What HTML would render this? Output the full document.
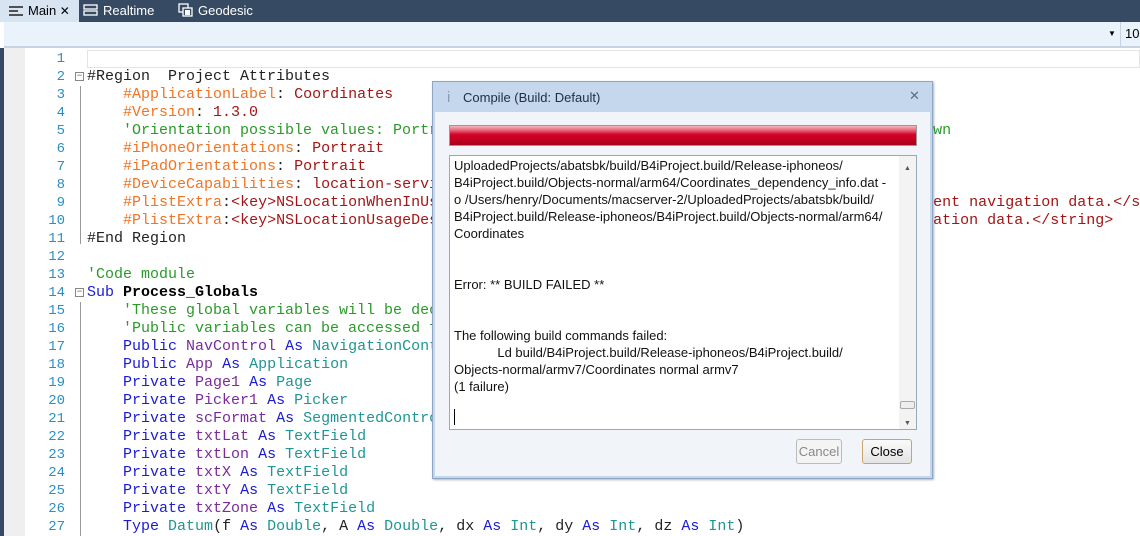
<!DOCTYPE html><html><head><meta charset="utf-8"><style>
*{margin:0;padding:0;box-sizing:border-box}
body{width:1140px;height:536px;overflow:hidden;background:#fff;position:relative;font-family:"Liberation Sans",sans-serif}
.tabs{position:absolute;left:0;top:0;width:1140px;height:22px;background:#364a63}
.tab{position:absolute;top:0;height:22px;font-size:13px;line-height:22px;color:#fff}
.tb{position:absolute;left:4px;top:22px;width:1136px;height:26px;background:#eaf2fb;border-bottom:2px solid #c5d3e2}
.lm{position:absolute;left:0;top:48px;width:4px;height:488px;background:#364a63}
.gm{position:absolute;left:4px;top:48px;width:21px;height:488px;background:#efefef}
.ln{position:absolute;left:25px;width:40px;text-align:right;font:14px/18px "Liberation Mono",monospace;color:#2b8fc3}
.cd{position:absolute;left:87px;white-space:pre;font:15px/18px "Liberation Mono",monospace;color:#222}
.k{color:#1b1bd6}.v{color:#7b2a9c}.t{color:#1f9595}.c{color:#2a9a2a}.o{color:#f07424}.r{color:#a31515}.b{font-weight:bold;color:#000}
.fold{position:absolute;left:75px;width:9px;height:9px;border:1px solid #888;background:#fff;font:9px/7px monospace;text-align:center;color:#555}
.dlg{position:absolute;left:432px;top:81px;width:501px;height:398px;background:#c4d7ec;border:1px solid #8ea6c2;box-shadow:1px 1px 2px rgba(0,0,0,.3)}
.dbody{position:absolute;left:2px;top:30px;width:495px;height:364px;background:#f1f5fa}
.pb{position:absolute;left:14px;top:13px;width:468px;height:21px;border:1px solid #999;background:linear-gradient(#f4b7bf 0%,#e8707e 20%,#d1022a 45%,#c8001f 70%,#a2001a 100%)}
.tx{position:absolute;left:14px;top:43px;width:468px;height:275px;background:#fff;border:1px solid #98a9bd;font:13px/17px "Liberation Sans",sans-serif;color:#111;padding:1px 0 0 4px}
.sb{position:absolute;right:0;top:0;width:17px;height:273px;background:#f3f3f3}
.btn{position:absolute;top:327px;height:25px;font:13px/23px "Liberation Sans",sans-serif;text-align:center;border-radius:3px}
</style></head><body>
<div class="tabs">
<div class="tab" style="left:0;width:79px;background:#d9e4f2;color:#000;padding-left:28px">Main <span style="font-size:12px">✕</span></div>
<svg style="position:absolute;left:8px;top:5px" width="16" height="12"><g fill="none" stroke="#222" stroke-width="1.5"><path d="M1 2h14M1 6h9M1 10h14"/></g></svg>
<svg style="position:absolute;left:83px;top:4px" width="16" height="14"><g fill="none" stroke="#fff" stroke-width="1.3"><rect x="1" y="1" width="13" height="4"/><rect x="1" y="7" width="13" height="4"/></g></svg>
<div class="tab" style="left:103px">Realtime</div>
<svg style="position:absolute;left:178px;top:3px" width="16" height="15"><g fill="none" stroke="#fff" stroke-width="1.3"><rect x="1" y="1" width="9" height="8"/><rect x="5" y="5" width="9" height="8" fill="#364a63"/></g><rect x="7" y="7" width="5" height="5" fill="#fff"/></svg>
<div class="tab" style="left:198px">Geodesic</div>
</div>
<div class="tb"><div style="position:absolute;left:1104px;top:7px;font-size:8px">▼</div><div style="position:absolute;left:1116px;top:0;width:20px;height:24px;border-left:1px solid #c5d3e2;font-size:13px;line-height:24px;padding-left:4px;overflow:hidden">100</div></div>
<div class="lm"></div><div class="gm"></div>
<div style="position:absolute;left:87px;top:50px;width:1053px;height:18px;border:1px solid #e4e4e4"></div>
<div style="position:absolute;left:80px;top:86px;width:1px;height:158px;background:#999"></div>
<div style="position:absolute;left:80px;top:302px;width:1px;height:234px;background:#999"></div>
<div class="fold" style="top:72px">−</div><div class="fold" style="top:288px">−</div>
<div class="ln" style="top:50px">1<br>2<br>3<br>4<br>5<br>6<br>7<br>8<br>9<br>10<br>11<br>12<br>13<br>14<br>15<br>16<br>17<br>18<br>19<br>20<br>21<br>22<br>23<br>24<br>25<br>26<br>27</div>
<div class="cd" style="top:50px">
#Region  Project Attributes
    <span class="o">#ApplicationLabel</span>: <span class="r">Coordinates</span>
    <span class="o">#Version</span>: <span class="r">1.3.0</span>
    <span class="c">'Orientation possible values: Portrait, LandscapeLeft, LandscapeRight and PortraitUpsideDown</span>
    <span class="o">#iPhoneOrientations</span>: <span class="r">Portrait</span>
    <span class="o">#iPadOrientations</span>: <span class="r">Portrait</span>
    <span class="o">#DeviceCapabilities</span>: <span class="r">location-services</span>
    <span class="o">#PlistExtra</span>:<span class="r">&lt;key&gt;NSLocationWhenInUseUsageDescription&lt;/key&gt;&lt;string&gt;Used to display the current navigation data.&lt;/string&gt;</span>
    <span class="o">#PlistExtra</span>:<span class="r">&lt;key&gt;NSLocationUsageDescription&lt;/key&gt;&lt;string&gt;Used to display the current navigation data.&lt;/string&gt;</span>
#End Region

<span class="c">'Code module</span>
<span class="k">Sub</span> <span class="b">Process_Globals</span>
    <span class="c">'These global variables will be declared once when the application starts.</span>
    <span class="c">'Public variables can be accessed from all modules.</span>
    <span class="k">Public</span> <span class="v">NavControl</span> <span class="k">As</span> <span class="t">NavigationController</span>
    <span class="k">Public</span> <span class="v">App</span> <span class="k">As</span> <span class="t">Application</span>
    <span class="k">Private</span> <span class="v">Page1</span> <span class="k">As</span> <span class="t">Page</span>
    <span class="k">Private</span> <span class="v">Picker1</span> <span class="k">As</span> <span class="t">Picker</span>
    <span class="k">Private</span> <span class="v">scFormat</span> <span class="k">As</span> <span class="t">SegmentedControl</span>
    <span class="k">Private</span> <span class="v">txtLat</span> <span class="k">As</span> <span class="t">TextField</span>
    <span class="k">Private</span> <span class="v">txtLon</span> <span class="k">As</span> <span class="t">TextField</span>
    <span class="k">Private</span> <span class="v">txtX</span> <span class="k">As</span> <span class="t">TextField</span>
    <span class="k">Private</span> <span class="v">txtY</span> <span class="k">As</span> <span class="t">TextField</span>
    <span class="k">Private</span> <span class="v">txtZone</span> <span class="k">As</span> <span class="t">TextField</span>
    <span class="k">Type</span> <span class="t">Datum</span>(f <span class="k">As</span> <span class="t">Double</span>, A <span class="k">As</span> <span class="t">Double</span>, dx <span class="k">As</span> <span class="t">Int</span>, dy <span class="k">As</span> <span class="t">Int</span>, dz <span class="k">As</span> <span class="t">Int</span>)</div>
<div class="dlg">
<div style="position:absolute;left:14px;top:6px;font:15px/20px 'Liberation Sans';color:#8a9bb0">i</div>
<div style="position:absolute;left:30px;top:7px;font:13px/18px 'Liberation Sans';color:#1e2f45">Compile (Build: Default)</div>
<div style="position:absolute;left:476px;top:6px;font:13px/16px 'Liberation Sans';color:#5b6f88">✕</div>
<div class="dbody">
<div class="pb"></div>
<div class="tx">UploadedProjects/abatsbk/build/B4iProject.build/Release-iphoneos/<br>B4iProject.build/Objects-normal/arm64/Coordinates_dependency_info.dat -<br>o /Users/henry/Documents/macserver-2/UploadedProjects/abatsbk/build/<br>B4iProject.build/Release-iphoneos/B4iProject.build/Objects-normal/arm64/<br>Coordinates<br><br><br>Error: ** BUILD FAILED **<br><br><br>The following build commands failed:<br>&nbsp;&nbsp;&nbsp;&nbsp;&nbsp;&nbsp;&nbsp;&nbsp;&nbsp;&nbsp;&nbsp;&nbsp;Ld build/B4iProject.build/Release-iphoneos/B4iProject.build/<br>Objects-normal/armv7/Coordinates normal armv7<br>(1 failure)
<div style="position:absolute;left:4px;top:253px;width:1px;height:16px;background:#000"></div>
<div class="sb"><div style="position:absolute;left:5px;top:4px;font-size:7px;color:#555">▲</div><div style="position:absolute;left:1px;top:245px;width:15px;height:8px;border:1px solid #aaa;border-radius:2px;background:#eee"></div><div style="position:absolute;left:5px;top:259px;font-size:7px;color:#555">▼</div></div>
</div>
<div class="btn" style="left:361px;width:46px;border:1px solid #bbb;color:#888;background:#f4f4f4">Cancel</div>
<div class="btn" style="left:427px;width:50px;border:1px solid #c9a468;color:#000;background:linear-gradient(#fafafa,#e4e4e4)">Close</div>
</div></div>
</body></html>
